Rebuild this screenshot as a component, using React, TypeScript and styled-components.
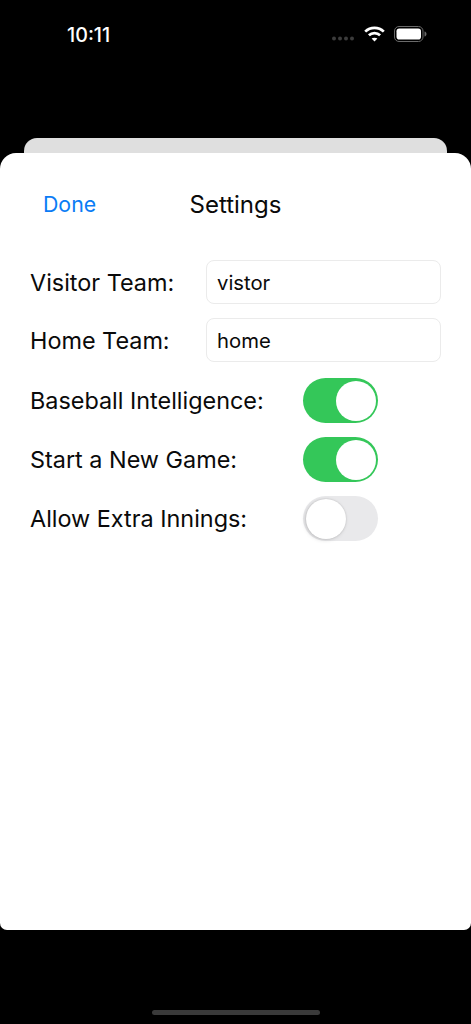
import React from "react";
import styled, { createGlobalStyle } from "styled-components";

const GlobalStyle = createGlobalStyle`
  html, body {
    margin: 0;
    padding: 0;
    background: #000;
    font-family: Inter, "Liberation Sans", sans-serif;
  }
`;

const Screen = styled.div`
  width: 471px;
  height: 1024px;
  background: #000;
  display: flex;
  flex-direction: column;
  overflow: hidden;
`;

const StatusBar = styled.div`
  height: 138px;
  box-sizing: border-box;
  padding: 22px 44px 0 67px;
  display: flex;
  align-items: flex-start;
  justify-content: space-between;
`;

const Clock = styled.div`
  color: #fff;
  font-size: 19.7px;
  font-weight: 500;
  line-height: 26px;
`;

const StatusIcons = styled.div`
  display: flex;
  align-items: center;
  gap: 9px;
  padding-top: 4px;
`;

const BackCard = styled.div`
  height: 15px;
  margin: 0 24px;
  background: #dfdfdf;
  border-radius: 13px 13px 0 0;
`;

const Sheet = styled.div`
  height: 777px;
  background: #fff;
  border-radius: 16px 16px 7px 7px;
  box-sizing: border-box;
  padding: 0 30px;
`;

const NavBar = styled.div`
  height: 107px;
  position: relative;
  display: flex;
  align-items: center;
  justify-content: center;
  padding-bottom: 3px;
  box-sizing: border-box;
`;

const DoneButton = styled.button`
  position: absolute;
  left: 13px;
  top: 37px;
  padding: 0;
  border: 0;
  background: none;
  color: #0a7cf5;
  font: 400 21.3px/28px Inter, "Liberation Sans", sans-serif;
`;

const Title = styled.div`
  font-size: 24px;
  font-weight: 400;
  color: #0a0a0a;
  line-height: 28px;
`;

const FieldRow = styled.label`
  display: flex;
  align-items: center;
  height: 44px;
  margin-bottom: 14px;
`;

const Label = styled.span`
  width: 176px;
  flex: none;
  font-size: 23.4px;
  color: #0a0a0a;
  white-space: nowrap;
`;

const TextField = styled.input`
  width: 235px;
  height: 44px;
  box-sizing: border-box;
  padding: 0 10px;
  border: 1px solid #ebebeb;
  border-radius: 8px;
  background: #fff;
  color: #0a0a0a;
  font: 400 20.3px Inter, "Liberation Sans", sans-serif;
  outline: none;
`;

const ToggleList = styled.div`
  display: flex;
  flex-direction: column;
  gap: 14px;
  padding-top: 2px;
`;

const ToggleRow = styled.div`
  display: flex;
  align-items: center;
  height: 45px;
`;

const ToggleLabel = styled(Label)`
  width: 273px;
`;

const Track = styled.div<{ $on: boolean }>`
  width: 75px;
  height: 45px;
  box-sizing: border-box;
  padding: 2.5px;
  border-radius: 23px;
  display: flex;
  justify-content: ${(p) => (p.$on ? "flex-end" : "flex-start")};
  background: ${(p) => (p.$on ? "#34c759" : "#e9e9eb")};
`;

const Knob = styled.div<{ $on: boolean }>`
  width: 40px;
  height: 40px;
  border-radius: 50%;
  background: #fff;
  box-shadow: ${(p) =>
    p.$on ? "none" : "-1px 1px 4px rgba(0,0,0,0.14), 0 0 2px rgba(0,0,0,0.14)"};
`;

const HomeArea = styled.div`
  flex: 1;
  display: flex;
  justify-content: center;
  align-items: flex-end;
  padding-bottom: 9px;
`;

const HomeBar = styled.div`
  width: 168px;
  height: 5px;
  border-radius: 3px;
  background: #3a3a3a;
`;

const Signal = () => (
  <svg width="23" height="5" viewBox="0 0 23 5" style={{ marginTop: 9 }}>
    {[2, 8, 14, 20].map((cx) => (
      <circle key={cx} cx={cx} cy="2.5" r="2" fill="#3c3c3c" />
    ))}
  </svg>
);

const Wifi = () => (
  <svg width="21" height="16" viewBox="0 0 21 16" fill="none" stroke="#fff" strokeWidth="2.7">
    <path d="M1.2 5.6C6.4 0.6 14.6 0.6 19.8 5.6" />
    <path d="M4.9 9.3C8 6.4 13 6.4 16.1 9.3" />
    <path d="M10.5 15.6L7.6 12.6C9.2 11.3 11.8 11.3 13.4 12.6Z" fill="#fff" stroke="none" />
  </svg>
);

const Battery = () => (
  <svg width="33" height="16" viewBox="0 0 33 16">
    <rect x="0.5" y="0.5" width="28.5" height="15" rx="4.5" fill="none" stroke="#6a6a6a" />
    <rect x="2.5" y="2.5" width="24.5" height="11" rx="2.8" fill="#fff" />
    <path d="M30.5 5.5C31.8 5.8 32.5 6.8 32.5 8C32.5 9.2 31.8 10.2 30.5 10.5Z" fill="#6a6a6a" />
  </svg>
);

const fields = [
  { label: "Visitor Team:", value: "vistor" },
  { label: "Home Team:", value: "home" },
];

const toggles = [
  { label: "Baseball Intelligence:", on: true },
  { label: "Start a New Game:", on: true },
  { label: "Allow Extra Innings:", on: false },
];

export default function App() {
  return (
    <Screen>
      <GlobalStyle />
      <StatusBar>
        <Clock>10:11</Clock>
        <StatusIcons>
          <Signal />
          <Wifi />
          <Battery />
        </StatusIcons>
      </StatusBar>
      <BackCard />
      <Sheet>
        <NavBar>
          <DoneButton>Done</DoneButton>
          <Title>Settings</Title>
        </NavBar>
        {fields.map((f) => (
          <FieldRow key={f.label}>
            <Label>{f.label}</Label>
            <TextField readOnly value={f.value} />
          </FieldRow>
        ))}
        <ToggleList>
          {toggles.map((t) => (
            <ToggleRow key={t.label}>
              <ToggleLabel>{t.label}</ToggleLabel>
              <Track $on={t.on}>
                <Knob $on={t.on} />
              </Track>
            </ToggleRow>
          ))}
        </ToggleList>
      </Sheet>
      <HomeArea>
        <HomeBar />
      </HomeArea>
    </Screen>
  );
}
